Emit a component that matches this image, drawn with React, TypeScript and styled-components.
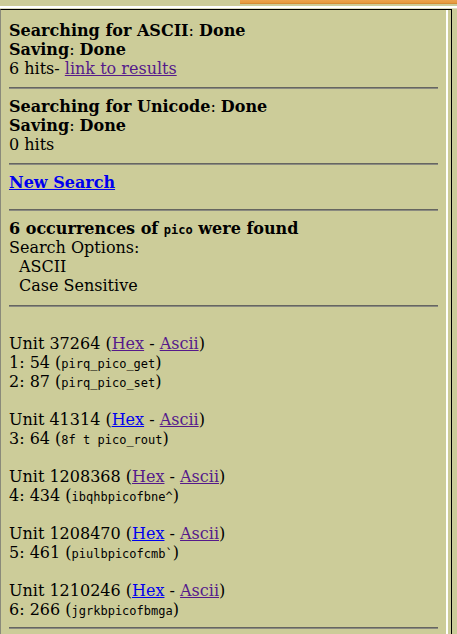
import styled, { createGlobalStyle } from 'styled-components';

const GlobalStyle = createGlobalStyle`
  html, body {
    margin: 0;
    padding: 0;
    background: #cccc99;
  }
  body {
    font-family: "DejaVu Serif", "Liberation Serif", serif;
    font-size: 16px;
    color: #000;
  }
`;

const Page = styled.div`
  min-height: 634px;
  background: #cccc99;
  display: flex;
  flex-direction: column;
`;

const TopStrip = styled.div`
  height: 4px;
  display: flex;
  justify-content: flex-end;
`;

const OrangeBar = styled.div`
  width: 217px;
  height: 4px;
  background: linear-gradient(to bottom, #eba34e 0%, #e79a3f 70%, #c9802e 100%);
`;

const FrameEdge = styled.div`
  height: 5px;
  box-sizing: border-box;
  border-top: 2px solid #cccc99;
  border-bottom: 1px solid #dcdcc0;
  background: #ffffff;
`;

const Frame = styled.div`
  flex: 1;
  width: 452px;
  box-sizing: border-box;
  display: flex;
  border-top: 1px solid #000;
  border-left: 1px solid #8a8a7a;
  border-right: 1px solid #000;
  padding-right: 3px;
`;

const Content = styled.div`
  flex: 1;
  padding: 11px 8px 0 8px;
  border-right: 2px solid #ffffff;
`;

const Section = styled.div<{ $after?: number }>`
  line-height: 19px;
  padding-bottom: ${({ $after }) => $after ?? 0}px;
`;

const Rule = styled.hr`
  margin: 8px 0;
  height: 0;
  border: none;
  border-top: 1px solid #666660;
  border-bottom: 1px solid #8a8a80;
`;

const Link = styled.a<{ $visited?: boolean }>`
  color: ${({ $visited }) => ($visited ? '#551a8b' : '#0000ee')};
  text-decoration: underline;
  cursor: pointer;
`;

const Code = styled.code`
  font-family: "DejaVu Sans Mono", "Liberation Mono", monospace;
  font-size: 12px;
  line-height: 1;
`;

const Indent = styled.div`
  padding-left: 10px;
`;

const Spacer = styled.div`
  height: 19px;
`;

interface Hit {
  n: number;
  offset: number;
  text: string;
}

interface Unit {
  id: number;
  hexVisited: boolean;
  hits: Hit[];
}

const units: Unit[] = [
  {
    id: 37264,
    hexVisited: true,
    hits: [
      { n: 1, offset: 54, text: 'pirq_pico_get' },
      { n: 2, offset: 87, text: 'pirq_pico_set' },
    ],
  },
  { id: 41314, hexVisited: false, hits: [{ n: 3, offset: 64, text: '8f t pico_rout' }] },
  { id: 1208368, hexVisited: true, hits: [{ n: 4, offset: 434, text: 'ibqhbpicofbne^' }] },
  { id: 1208470, hexVisited: false, hits: [{ n: 5, offset: 461, text: 'piulbpicofcmb`' }] },
  { id: 1210246, hexVisited: false, hits: [{ n: 6, offset: 266, text: 'jgrkbpicofbmga' }] },
];

const App = () => {
  return (
    <>
      <GlobalStyle />
      <Page>
        <TopStrip>
          <OrangeBar />
        </TopStrip>
        <FrameEdge />
        <Frame>
          <Content>
            <Section $after={1}>
              <b>Searching for ASCII</b>: <b>Done</b>
              <br />
              <b>Saving</b>: <b>Done</b>
              <br />
              6 hits- <Link $visited>link to results</Link>
            </Section>
            <Rule />
            <Section $after={1}>
              <b>Searching for Unicode</b>: <b>Done</b>
              <br />
              <b>Saving</b>: <b>Done</b>
              <br />0 hits
            </Section>
            <Rule />
            <Section $after={9}>
              <b>
                <Link>New Search</Link>
              </b>
            </Section>
            <Rule />
            <Section $after={2}>
              <b>
                6 occurrences of <Code>pico</Code> were found
              </b>
              <br />
              Search Options:
              <Indent>ASCII</Indent>
              <Indent>Case Sensitive</Indent>
            </Section>
            <Rule />
            <Section>
              {units.map((u) => (
                <div key={u.id}>
                  <Spacer />
                  Unit {u.id} (<Link $visited={u.hexVisited}>Hex</Link> - <Link $visited>Ascii</Link>)
                  {u.hits.map((h) => (
                    <div key={h.n}>
                      {h.n}: {h.offset} (<Code>{h.text}</Code>)
                    </div>
                  ))}
                </div>
              ))}
            </Section>
            <Rule />
          </Content>
        </Frame>
      </Page>
    </>
  );
};

export default App;
